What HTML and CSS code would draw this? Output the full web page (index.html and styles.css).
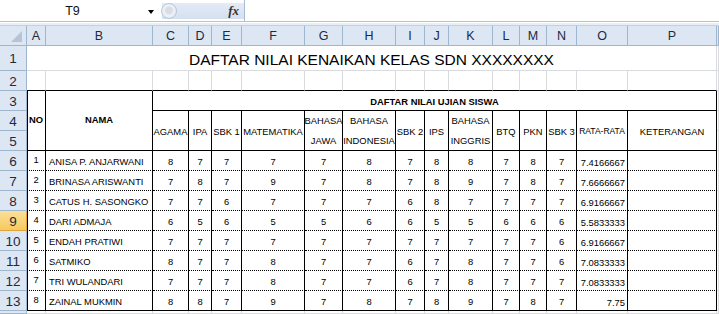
FILE: index.html
```html
<!DOCTYPE html>
<html lang="id">
  <head>
    <meta charset="UTF-8" />
    <title>Daftar Nilai</title>
    <link rel="stylesheet" href="styles.css">
  </head>
  <body>
    <div class="formula-bar">
      <div class="name-box"><span class="cell-ref">T9</span><span class="drop"></span></div>
      <div class="fx-box"><span class="knob"></span><span class="fx">fx</span></div>
      <div class="formula-input"></div>
    </div>
    <div class="bar-gap"></div>

    <div class="sheet">
      <!-- column letters -->
      <div class="ch corner"><span class="tri"></span></div>
      <div class="ch">A</div><div class="ch">B</div><div class="ch">C</div><div class="ch">D</div>
      <div class="ch">E</div><div class="ch">F</div><div class="ch">G</div><div class="ch">H</div>
      <div class="ch">I</div><div class="ch">J</div><div class="ch">K</div><div class="ch">L</div>
      <div class="ch">M</div><div class="ch">N</div><div class="ch">O</div><div class="ch">P</div>
      <div class="ch"></div>

      <!-- row 1 -->
      <div class="rh">1</div>
      <div class="c title">DAFTAR NILAI KENAIKAN KELAS SDN XXXXXXXX</div>
      <div class="c"></div>

      <!-- row 2 -->
      <div class="rh">2</div>
      <div class="c top"></div><div class="c top"></div><div class="c top"></div><div class="c top"></div>
      <div class="c top"></div><div class="c top"></div><div class="c top"></div><div class="c top"></div>
      <div class="c top"></div><div class="c top"></div><div class="c top"></div><div class="c top"></div>
      <div class="c top"></div><div class="c top"></div><div class="c top"></div><div class="c top"></div>
      <div class="c"></div>

      <!-- rows 3-5 : table head -->
      <div class="rh">3</div>
      <div class="hd first tall bold">NO</div>
      <div class="hd tall bold">NAMA</div>
      <div class="hd group bold">DAFTAR NILAI UJIAN SISWA</div>
      <div class="c"></div>

      <div class="rh">4</div>
      <div class="hd sub">AGAMA</div>
      <div class="hd sub">IPA</div>
      <div class="hd sub">SBK 1</div>
      <div class="hd sub">MATEMATIKA</div>
      <div class="hd sub two"><span>BAHASA</span><span>JAWA</span></div>
      <div class="hd sub two"><span>BAHASA</span><span>INDONESIA</span></div>
      <div class="hd sub">SBK 2</div>
      <div class="hd sub">IPS</div>
      <div class="hd sub two"><span>BAHASA</span><span>INGGRIS</span></div>
      <div class="hd sub">BTQ</div>
      <div class="hd sub">PKN</div>
      <div class="hd sub">SBK 3</div>
      <div class="hd sub small">RATA-RATA</div>
      <div class="hd sub">KETERANGAN</div>
      <div class="c"></div>

      <div class="rh">5</div>
      <div class="c"></div>

      <!-- rows 6-13 : data -->
      <div class="rh">6</div>
      <div class="d no first">1</div><div class="d name">ANISA P. ANJARWANI</div>
      <div class="d">8</div><div class="d">7</div><div class="d">7</div><div class="d">7</div><div class="d">7</div><div class="d">8</div>
      <div class="d">7</div><div class="d">8</div><div class="d">8</div><div class="d">7</div><div class="d">8</div><div class="d">7</div>
      <div class="d avg">7.4166667</div><div class="d"></div>
      <div class="c"></div>

      <div class="rh">7</div>
      <div class="d no first">2</div><div class="d name">BRINASA ARISWANTI</div>
      <div class="d">7</div><div class="d">8</div><div class="d">7</div><div class="d">9</div><div class="d">7</div><div class="d">8</div>
      <div class="d">7</div><div class="d">8</div><div class="d">9</div><div class="d">7</div><div class="d">8</div><div class="d">7</div>
      <div class="d avg">7.6666667</div><div class="d"></div>
      <div class="c"></div>

      <div class="rh">8</div>
      <div class="d no first">3</div><div class="d name">CATUS H. SASONGKO</div>
      <div class="d">7</div><div class="d">7</div><div class="d">6</div><div class="d">7</div><div class="d">7</div><div class="d">7</div>
      <div class="d">6</div><div class="d">8</div><div class="d">7</div><div class="d">7</div><div class="d">7</div><div class="d">7</div>
      <div class="d avg">6.9166667</div><div class="d"></div>
      <div class="c"></div>

      <div class="rh sel">9</div>
      <div class="d no first">4</div><div class="d name">DARI ADMAJA</div>
      <div class="d">6</div><div class="d">5</div><div class="d">6</div><div class="d">5</div><div class="d">5</div><div class="d">6</div>
      <div class="d">6</div><div class="d">5</div><div class="d">5</div><div class="d">6</div><div class="d">6</div><div class="d">6</div>
      <div class="d avg">5.5833333</div><div class="d"></div>
      <div class="c"></div>

      <div class="rh">10</div>
      <div class="d no first">5</div><div class="d name">ENDAH PRATIWI</div>
      <div class="d">7</div><div class="d">7</div><div class="d">7</div><div class="d">7</div><div class="d">7</div><div class="d">7</div>
      <div class="d">7</div><div class="d">7</div><div class="d">7</div><div class="d">7</div><div class="d">7</div><div class="d">6</div>
      <div class="d avg">6.9166667</div><div class="d"></div>
      <div class="c"></div>

      <div class="rh">11</div>
      <div class="d no first">6</div><div class="d name">SATMIKO</div>
      <div class="d">8</div><div class="d">7</div><div class="d">7</div><div class="d">8</div><div class="d">7</div><div class="d">7</div>
      <div class="d">6</div><div class="d">7</div><div class="d">8</div><div class="d">7</div><div class="d">7</div><div class="d">6</div>
      <div class="d avg">7.0833333</div><div class="d"></div>
      <div class="c"></div>

      <div class="rh">12</div>
      <div class="d no first">7</div><div class="d name">TRI WULANDARI</div>
      <div class="d">7</div><div class="d">7</div><div class="d">7</div><div class="d">8</div><div class="d">7</div><div class="d">7</div>
      <div class="d">6</div><div class="d">7</div><div class="d">8</div><div class="d">7</div><div class="d">7</div><div class="d">7</div>
      <div class="d avg">7.0833333</div><div class="d"></div>
      <div class="c"></div>

      <div class="rh">13</div>
      <div class="d last no first">8</div><div class="d last name">ZAINAL MUKMIN</div>
      <div class="d last">8</div><div class="d last">8</div><div class="d last">7</div><div class="d last">9</div><div class="d last">7</div><div class="d last">8</div>
      <div class="d last">7</div><div class="d last">8</div><div class="d last">9</div><div class="d last">7</div><div class="d last">8</div><div class="d last">7</div>
      <div class="d last avg">7.75</div><div class="d last"></div>
      <div class="c"></div>

      <!-- sliver of row 14 at the bottom edge -->
      <div class="rh"></div>
      <div class="c"></div><div class="c"></div><div class="c"></div><div class="c"></div><div class="c"></div><div class="c"></div>
      <div class="c"></div><div class="c"></div><div class="c"></div><div class="c"></div><div class="c"></div><div class="c"></div>
      <div class="c"></div><div class="c"></div><div class="c"></div><div class="c"></div><div class="c"></div>
    </div>
  </body>
</html>
```

FILE: styles.css
```css
* {
  margin: 0;
  padding: 0;
  box-sizing: border-box;
}
body {
  width: 719px;
  height: 314px;
  overflow: hidden;
  background: #fff;
  font-family: "Liberation Sans", Arial, sans-serif;
  color: #000;
}

/* formula bar */
.formula-bar {
  display: flex;
  height: 22px;
  border-bottom: 1px solid #b3c3d7;
  background: #fff;
}
.name-box {
  width: 162px;
  display: flex;
  align-items: center;
}
.cell-ref {
  width: 145px;
  text-align: center;
  font-size: 12.5px;
  color: #111;
}
.drop {
  width: 0;
  height: 0;
  margin-left: 3px;
  margin-top: 2px;
  border-left: 3.5px solid transparent;
  border-right: 3.5px solid transparent;
  border-top: 4px solid #000;
}
.fx-box {
  width: 83px;
  display: flex;
  align-items: center;
  justify-content: space-between;
  border-right: 1px solid #a9bbd1;
  padding-right: 5px;
  background: linear-gradient(#fff 0 3px, #e3ebf6 3px, #d4e0f0 19px, #fff 19px);
}
.knob {
  width: 16px;
  height: 16px;
  border-radius: 50%;
  margin-left: -1px;
  border: 1px solid #b7c6da;
  background: radial-gradient(circle at 50% 45%, #d9dde3 0 3px, #eef2f8 5px, #e3ebf6 8px);
}
.fx {
  font-family: "Liberation Serif", serif;
  font-style: italic;
  font-weight: bold;
  font-size: 13px;
  color: #333;
}
.formula-input {
  flex: 1;
}
.bar-gap {
  height: 4px;
  border-bottom: 1px solid #c3d0e0;
  background: linear-gradient(#fff 0 1px, #e8eef6 1px);
}

/* sheet grid */
.sheet {
  display: grid;
  grid-template-columns: 27px 19px 107px 36px 23px 30px 63px 38px 53px 29px 24px 44px 27px 27px 30px 51px 89px 2px;
  grid-template-rows: 20px 25px repeat(12, 20px) 3px;
}
.ch,
.rh {
  display: flex;
  align-items: center;
  justify-content: center;
  background: #dde7f4;
  border-right: 1px solid #9eb6ce;
  border-bottom: 1px solid #9eb6ce;
  color: #1c2a42;
  font-size: 12.5px;
}
.ch {
  padding-top: 1px;
}
.rh {
  font-size: 13.5px;
  padding-top: 1px;
}
.rh.sel {
  background: linear-gradient(#fbe09a, #f6c95c);
  border-bottom-color: #e0a43f;
  border-right-color: #e0a43f;
}
.corner {
  position: relative;
}
.tri {
  position: absolute;
  right: 4px;
  bottom: 3px;
  width: 0;
  height: 0;
  border-left: 11px solid transparent;
  border-bottom: 11px solid #b6c4d6;
}

.c {
  border-right: 1px solid #d9dbde;
  border-bottom: 1px solid #d9dbde;
}
.c.top {
  border-bottom-color: #000;
}
.title {
  grid-column: span 16;
  display: flex;
  align-items: center;
  justify-content: center;
  padding-top: 4px;
  font-size: 15.5px;
}

/* table head */
.hd {
  display: flex;
  flex-direction: column;
  align-items: center;
  justify-content: center;
  border-right: 1px solid #000;
  border-bottom: 1px solid #000;
  font-size: 9.4px;
  padding-top: 1px;
  white-space: nowrap;
}
.bold {
  font-weight: bold;
}
.tall {
  grid-row: span 3;
  padding-bottom: 4px;
}
.group {
  grid-column: span 14;
}
.sub {
  grid-row: span 2;
}
.two span {
  line-height: 20px;
}
.small {
  font-size: 8.5px;
}
.first {
  box-shadow: inset 1px 0 #000;
}

/* data */
.d {
  display: flex;
  align-items: center;
  justify-content: center;
  border-right: 1px solid #000;
  border-bottom: 1px dotted #000;
  font-size: 9.4px;
  padding-top: 2px;
  white-space: nowrap;
}
.d.last {
  border-bottom: 1px solid #000;
}
.d.no {
  padding-top: 0;
  padding-bottom: 2px;
}
.d.name {
  justify-content: flex-start;
  padding-left: 3px;
}
.d.avg {
  justify-content: flex-end;
  padding-right: 2px;
  padding-top: 4px;
}
```
